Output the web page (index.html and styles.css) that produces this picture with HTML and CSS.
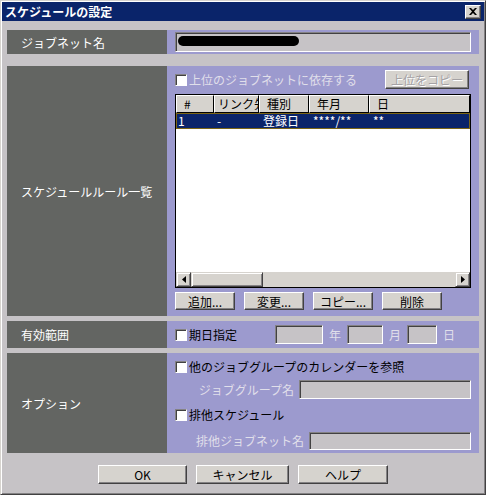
FILE: index.html
```html
<!DOCTYPE html>
<html lang="ja">
<head>
    <meta charset="UTF-8">
    <title>スケジュールの設定</title>
    <link rel="stylesheet" href="styles.css">
</head>
<body>
    <div class="window">
        <div class="titlebar">
            <span class="title">スケジュールの設定</span>
            <span class="close">
                <svg width="8" height="7" viewBox="0 0 8 7"><path d="M0 0h2l2 2 2-2h2L5 3.5 8 7H6L4 5 2 7H0l3-3.5z" fill="#000"/></svg>
            </span>
        </div>

        <div class="content">
            <div class="row row-name">
                <div class="label">ジョブネット名</div>
                <div class="panel">
                    <div class="field field-name"><span class="redacted"></span></div>
                </div>
            </div>

            <div class="row row-rules">
                <div class="label">スケジュールルール一覧</div>
                <div class="panel">
                    <div class="line line-top">
                        <span class="check disabled"><span class="box"></span>上位のジョブネットに依存する</span>
                        <button class="btn btn-copy-parent" disabled>上位をコピー</button>
                    </div>
                    <div class="listbox">
                        <div class="list-head">
                            <span class="col c1">#</span>
                            <span class="col c2">リンク先</span>
                            <span class="col c3">種別</span>
                            <span class="col c4">年月</span>
                            <span class="col c5">日</span>
                        </div>
                        <div class="list-row selected">
                            <span class="col c1">1</span>
                            <span class="col c2">-</span>
                            <span class="col c3">登録日</span>
                            <span class="col c4">****/**</span>
                            <span class="col c5">**</span>
                        </div>
                        <div class="list-space"></div>
                        <div class="hscroll">
                            <span class="sb-btn"><svg width="4" height="7" viewBox="0 0 4 7"><path d="M4 0v7L0 3.5z" fill="#000"/></svg></span>
                            <span class="sb-thumb"></span>
                            <span class="sb-track"></span>
                            <span class="sb-btn"><svg width="4" height="7" viewBox="0 0 4 7"><path d="M0 0v7l4-3.5z" fill="#000"/></svg></span>
                        </div>
                    </div>
                    <div class="actions">
                        <button class="btn btn-act">追加...</button>
                        <button class="btn btn-act">変更...</button>
                        <button class="btn btn-act">コピー...</button>
                        <button class="btn btn-act">削除</button>
                    </div>
                </div>
            </div>

            <div class="row row-range">
                <div class="label">有効範囲</div>
                <div class="panel">
                    <span class="check"><span class="box"></span>期日指定</span>
                    <span class="field f-year"></span><span class="unit">年</span>
                    <span class="field f-month"></span><span class="unit">月</span>
                    <span class="field f-day"></span><span class="unit">日</span>
                </div>
            </div>

            <div class="row row-options">
                <div class="label">オプション</div>
                <div class="panel">
                    <span class="check"><span class="box"></span>他のジョブグループのカレンダーを参照</span>
                    <div class="line sub sub-group">
                        <span class="sub-label">ジョブグループ名</span>
                        <span class="field f-sub"></span>
                    </div>
                    <span class="check"><span class="box"></span>排他スケジュール</span>
                    <div class="line sub sub-net">
                        <span class="sub-label">排他ジョブネット名</span>
                        <span class="field f-sub"></span>
                    </div>
                </div>
            </div>
        </div>

        <div class="footer">
            <button class="btn btn-ok">OK</button>
            <button class="btn btn-cancel">キャンセル</button>
            <button class="btn btn-help">ヘルプ</button>
        </div>
    </div>
</body>
</html>
```

FILE: styles.css
```css
body {
    margin: 0;
    padding: 0;
    background: #c6c3c6;
    font-family: "Noto Sans CJK JP", "DejaVu Sans", sans-serif;
    font-size: 12px;
}

.window {
    width: 486px;
    height: 495px;
    box-sizing: border-box;
    background: #c6c3c6;
    border-style: solid;
    border-width: 1px;
    border-color: #d6d3ce #424142 #424142 #d6d3ce;
    box-shadow: inset 1px 1px 0 #fff, inset -1px -1px 0 #848284;
    padding: 1px;
    display: flex;
    flex-direction: column;
}

.titlebar {
    height: 19px;
    background: #0a246a;
    color: #fff;
    display: flex;
    align-items: center;
    justify-content: space-between;
    padding: 0 3px 0 3px;
}

.title {
    font-weight: 700;
    font-size: 12px;
    line-height: 19px;
}

.close {
    width: 16px;
    height: 14px;
    box-sizing: border-box;
    background: #d6d3ce;
    border-style: solid;
    border-width: 1px;
    border-color: #fff #424142 #424142 #fff;
    box-shadow: inset -1px -1px 0 #848284;
    display: flex;
    align-items: center;
    justify-content: center;
}

.content {
    padding: 9px 5px 0 5px;
}

.row {
    display: flex;
    margin-bottom: 5px;
}

.row-name {
    margin-bottom: 12px;
}

.label {
    width: 160px;
    flex-shrink: 0;
    background: #636562;
    color: #fff;
    display: flex;
    align-items: center;
    padding-left: 14px;
    box-sizing: border-box;
}

.panel {
    flex: 1;
    background: #9c9ace;
    padding: 0 8px;
    color: #000;
}

/* fields */

.field {
    display: inline-block;
    box-sizing: border-box;
    height: 20px;
    background: #c6c3c6;
    border-style: solid;
    border-width: 1px;
    border-color: #848284 #fff #fff #848284;
    box-shadow: inset 1px 1px 0 #424142;
}

.row-name .panel {
    height: 24px;
    padding-top: 2px;
    box-sizing: border-box;
}

.field-name {
    display: block;
    width: 296px;
    position: relative;
}

.redacted {
    position: absolute;
    left: 2px;
    top: 3px;
    width: 121px;
    height: 10px;
    border-radius: 5px;
    background: #000;
}

/* checkboxes */

.check {
    display: flex;
    align-items: center;
    line-height: 16px;
}

.box {
    width: 12px;
    height: 12px;
    box-sizing: border-box;
    background: #fff;
    border-style: solid;
    border-width: 1px;
    border-color: #848284 #fff #fff #848284;
    box-shadow: inset 1px 1px 0 #424142;
    margin-right: 2px;
    flex-shrink: 0;
}

.check.disabled {
    color: #e0dfea;
}

/* buttons */

.btn {
    font-family: "Noto Sans CJK JP", "DejaVu Sans", sans-serif;
    font-size: 12px;
    color: #000;
    background: #d6d3ce;
    box-sizing: border-box;
    border-style: solid;
    border-width: 1px;
    border-color: #fff #424142 #424142 #fff;
    box-shadow: inset -1px -1px 0 #848284;
    padding: 0;
    line-height: 15px;
    height: 18px;
}

.btn[disabled] {
    color: #a5a2a5;
    text-shadow: 1px 1px 0 #fff;
}

/* schedule rules */

.row-rules .panel {
    padding-top: 4px;
    padding-bottom: 6px;
}

.line {
    display: flex;
    align-items: center;
}

.line-top {
    justify-content: space-between;
    height: 19px;
}

.btn-copy-parent {
    width: 84px;
    height: 19px;
    margin-right: 2px;
}

.listbox {
    margin-top: 5px;
    width: 296px;
    height: 194px;
    box-sizing: border-box;
    border: 1px solid #000;
    background: #fff;
    display: flex;
    flex-direction: column;
}

.list-head,
.list-row {
    display: flex;
}

.col {
    white-space: nowrap;
    box-sizing: border-box;
}

.c1 { width: 38px; }
.c2 { width: 45px; }
.c3 { width: 50px; }
.c4 { width: 60px; }
.c5 { flex: 1; }

.list-head .col {
    height: 18px;
    line-height: 15px;
    background: #d6d3ce;
    border-style: solid;
    border-width: 1px;
    border-color: #fff #000 #000 #fff;
    padding-left: 7px;
}

.list-head .c2 {
    padding-left: 3px;
    overflow: hidden;
}

.list-row {
    height: 16px;
    line-height: 16px;
}

.list-row.selected {
    background: #0a246a;
    color: #fff;
    box-shadow: inset 0 0 0 1px #7b6516;
}

.list-row .col {
    padding-left: 3px;
}

.list-row .c1 { padding-left: 2px; }
.list-row .c3,
.list-row .c4,
.list-row .c5 { padding-left: 4px; }

.list-space {
    flex: 1;
}

.hscroll {
    height: 15px;
    display: flex;
    background: #d6d3ce;
}

.sb-btn,
.sb-thumb {
    box-sizing: border-box;
    background: #d6d3ce;
    border-style: solid;
    border-width: 1px;
    border-color: #d6d3ce #424142 #424142 #d6d3ce;
    box-shadow: inset 1px 1px 0 #fff, inset -1px -1px 0 #848284;
    display: flex;
    align-items: center;
    justify-content: center;
}

.sb-btn {
    width: 15px;
}

.sb-thumb {
    width: 72px;
}

.sb-track {
    flex: 1;
}

.actions {
    margin-top: 4px;
    display: flex;
    gap: 9px;
}

.btn-act {
    width: 60px;
}

/* valid range */

.row-range .panel {
    height: 27px;
    display: flex;
    align-items: center;
    box-sizing: border-box;
}

.row-range .check {
    width: 100px;
}

.row-range .field {
    height: 19px;
}

.f-year { width: 48px; }
.f-month { width: 36px; }
.f-day { width: 30px; }

.unit {
    color: #e0dfea;
    width: 24px;
    text-align: center;
}

/* options */

.row-options .panel {
    height: 100px;
    box-sizing: border-box;
    padding-top: 6px;
}

.sub {
    justify-content: flex-end;
    height: 19px;
}

.sub-group {
    margin: 5px 0 8px;
}

.sub-net {
    margin-top: 8px;
}

.sub-label {
    color: #e0dfea;
    margin-right: 5px;
}

.sub-group .f-sub { width: 172px; height: 19px; }
.sub-net .f-sub { width: 162px; height: 18px; }

/* footer */

.footer {
    display: flex;
    justify-content: center;
    gap: 9px;
    margin-top: 7px;
}

.footer .btn {
    height: 19px;
}

.btn-ok { width: 89px; }
.btn-cancel { width: 93px; }
.btn-help { width: 90px; }
```
